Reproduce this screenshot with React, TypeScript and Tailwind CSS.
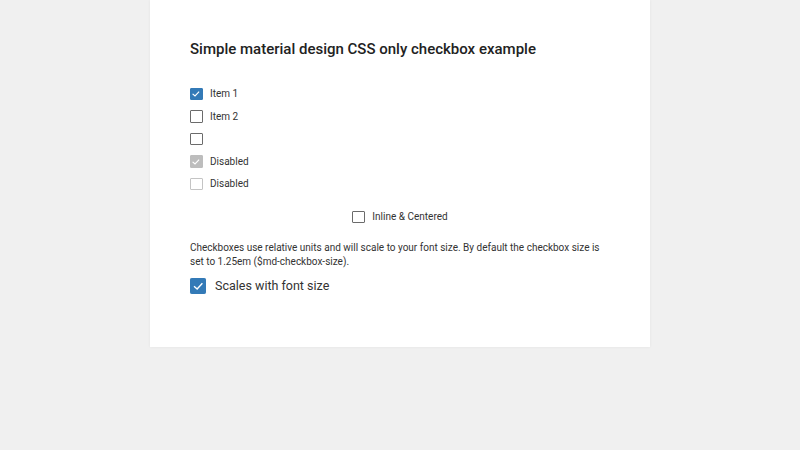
import React from "react";

function Box({ checked, disabled, size }: { checked?: boolean; disabled?: boolean; size: number }) {
  const bw = size * 0.1;
  let cls = "";
  let style: React.CSSProperties = { width: size, height: size, borderWidth: bw, borderRadius: size * 0.08 };
  if (checked && !disabled) cls = "bg-[#337ab7] border-[#337ab7]";
  else if (checked && disabled) cls = "bg-[#bdbdbd] border-[#bdbdbd]";
  else if (disabled) cls = "bg-white border-[#c4c4c4]";
  else cls = "bg-white border-[#6b6b6b]";
  return (
    <span className={`relative inline-flex shrink-0 items-center justify-center border-solid ${cls}`} style={style}>
      {checked && (
        <svg viewBox="0 0 20 20" className="absolute" style={{ width: size * 0.8, height: size * 0.8 }}>
          <polyline points="4,10.5 8,14 15.5,6" fill="none" stroke="white" strokeWidth="2.2" strokeLinecap="square" />
        </svg>
      )}
    </span>
  );
}

function Row({ label, checked, disabled }: { label?: string; checked?: boolean; disabled?: boolean }) {
  return (
    <div className="flex h-[22.5px] items-center">
      <Box checked={checked} disabled={disabled} size={12.5} />
      {label && <span className="ml-[7.5px] text-[10px] leading-none text-[#333]">{label}</span>}
    </div>
  );
}

export default function App() {
  return (
    <div className="min-h-[450px] w-full bg-[#f0f0f0]" style={{ fontFamily: "Roboto, 'Noto Sans', sans-serif" }}>
      <div className="mx-auto w-[500px] bg-white px-10 pt-[39px] pb-[46px] shadow-[0_0_3px_rgba(0,0,0,0.06)]">
        <h1 className="h-[20px] text-[15px] leading-[20px] font-medium text-[#222]">
          Simple material design CSS only checkbox example
        </h1>
        <div className="mt-[23.75px] flex flex-col">
          <Row label="Item 1" checked />
          <Row label="Item 2" />
          <Row />
          <Row label="Disabled" checked disabled />
          <Row label="Disabled" disabled />
        </div>
        <div className="mt-[10.5px] flex h-[22.5px] items-center justify-center">
          <Box size={12.5} />
          <span className="ml-[7.5px] text-[10px] leading-none text-[#333]">Inline &amp; Centered</span>
        </div>
        <p className="mt-[12.75px] text-[10px] leading-[14px] text-[#333]">
          Checkboxes use relative units and will scale to your font size. By default the checkbox size is set to 1.25em ($md-checkbox-size).
        </p>
        <div className="mt-[2.5px] flex h-[29px] items-center">
          <Box checked size={16} />
          <span className="ml-[9px] text-[12.5px] leading-none text-[#333]">Scales with font size</span>
        </div>
      </div>
    </div>
  );
}
